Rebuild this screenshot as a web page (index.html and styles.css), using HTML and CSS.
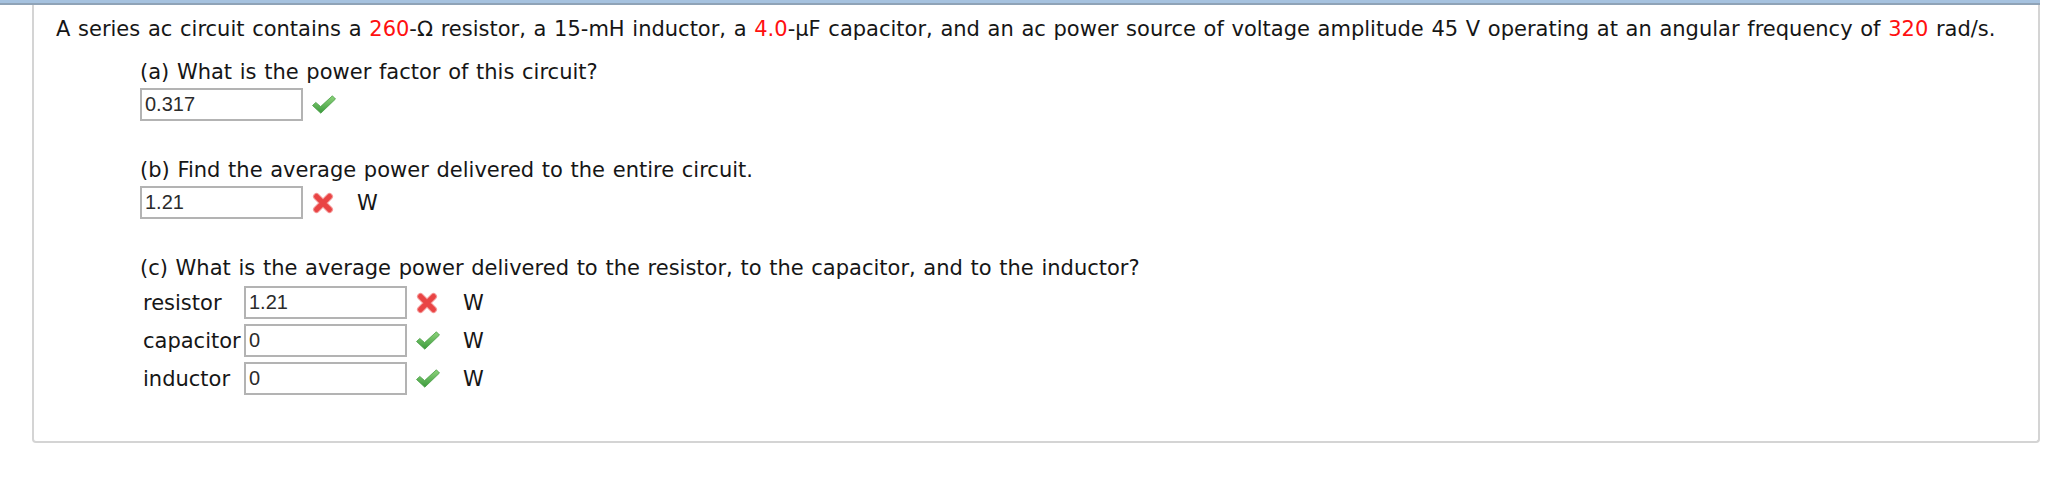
FILE: index.html
```html
<!DOCTYPE html>
<html lang="en">

<head>
    <meta charset="UTF-8">
    <title>AC Circuit Problem</title>
    <link rel="stylesheet" href="styles.css">
</head>

<body>
    <div class="page">
        <div class="topbar"></div>

        <div class="card">
            <p class="problem">A series ac circuit contains a <span class="given">260</span>-&#8486; resistor, a 15-mH inductor, a <span class="given">4.0</span>-&#956;F capacitor, and an ac power source of voltage amplitude 45 V operating at an angular frequency of <span class="given">320</span> rad/s.</p>

            <div class="part">
                <p class="question">(a) What is the power factor of this circuit?</p>
                <div class="answer-row">
                    <input class="answer" type="text" value="0.317" readonly>
                    <svg class="mark mark-ok" viewBox="0 0 24 19" width="24" height="19"><use href="#check"/></svg>
                </div>
            </div>

            <div class="part">
                <p class="question">(b) Find the average power delivered to the entire circuit.</p>
                <div class="answer-row">
                    <input class="answer" type="text" value="1.21" readonly>
                    <svg class="mark mark-bad" viewBox="0 0 22 22" width="22" height="22"><use href="#cross"/></svg>
                    <span class="unit">W</span>
                </div>
            </div>

            <div class="part">
                <p class="question">(c) What is the average power delivered to the resistor, to the capacitor, and to the inductor?</p>
                <div class="answer-grid">
                    <span class="label">resistor</span>
                    <input class="answer" type="text" value="1.21" readonly>
                    <svg class="mark mark-bad" viewBox="0 0 22 22" width="22" height="22"><use href="#cross"/></svg>
                    <span class="unit">W</span>

                    <span class="label">capacitor</span>
                    <input class="answer" type="text" value="0" readonly>
                    <svg class="mark mark-ok" viewBox="0 0 24 19" width="24" height="19"><use href="#check"/></svg>
                    <span class="unit">W</span>

                    <span class="label">inductor</span>
                    <input class="answer" type="text" value="0" readonly>
                    <svg class="mark mark-ok" viewBox="0 0 24 19" width="24" height="19"><use href="#check"/></svg>
                    <span class="unit">W</span>
                </div>
            </div>
        </div>
    </div>

    <!-- shared icon shapes -->
    <svg class="icon-defs" width="0" height="0">
        <defs>
            <linearGradient id="okFill" x1="0" y1="0" x2="0" y2="1">
                <stop offset="0" stop-color="#8fd47c"/>
                <stop offset="1" stop-color="#3b9a3c"/>
            </linearGradient>
            <symbol id="check" viewBox="0 0 24 19">
                <path d="M0.5 10.5 L3.8 7.4 L8.6 11.6 L20.4 0.8 L23.5 4 L8.8 18.2 Z" fill="url(#okFill)" stroke="#4a9e47" stroke-width="0.8" stroke-linejoin="round"/>
            </symbol>
            <symbol id="cross" viewBox="0 0 22 22">
                <path d="M4.5 4.5 L17.5 17.5 M17.5 4.5 L4.5 17.5" stroke="#f49a9a" stroke-width="7" stroke-linecap="round"/>
                <path d="M4.5 4.5 L17.5 17.5 M17.5 4.5 L4.5 17.5" stroke="#e94444" stroke-width="5" stroke-linecap="round"/>
            </symbol>
        </defs>
    </svg>
</body>

</html>
```

FILE: styles.css
```css
:root {
    --text-color: #161616;
    --given-color: #ff1010;
    --card-border: #d4d4d4;
}

body {
    margin: 0;
    background: white;
    font-family: 'DejaVu Sans', Verdana, sans-serif;
    font-size: 21px;
    line-height: 26px;
    word-spacing: 1px;
    color: var(--text-color);
}

.page {
    width: 2040px;
}

.topbar {
    height: 3px;
    background: #a6c2df;
    border-bottom: 2px solid #8fa3b7;
}

.card {
    margin-left: 32px;
    padding: 11px 8px 46px 22px;
    border: 2px solid var(--card-border);
    border-top: none;
    border-radius: 0 0 4px 4px;
}

.problem {
    margin: 0;
    white-space: nowrap;
}

.given {
    color: var(--given-color);
}

.part {
    margin-left: 84px;
    margin-top: 17px;
}

.part + .part {
    margin-top: 36px;
}

.question {
    margin: 0;
}

.answer-row {
    display: flex;
    align-items: center;
    margin-top: 3px;
}

.answer {
    box-sizing: border-box;
    width: 163px;
    height: 33px;
    margin: 0;
    padding: 0 3px;
    border: 2px solid #b3b3b3;
    font-family: 'Liberation Sans', Arial, sans-serif;
    font-size: 20px;
    word-spacing: 0;
    color: #2b2b2b;
    background: white;
}

.mark {
    display: block;
    margin-left: 9px;
}

.unit {
    margin-left: 23px;
}

.answer-grid {
    display: grid;
    grid-template-columns: 104px 163px 33px auto;
    row-gap: 5px;
    align-items: center;
    justify-items: start;
    margin-top: 5px;
}

.label {
    padding-left: 3px;
}

.icon-defs {
    position: absolute;
}
```
